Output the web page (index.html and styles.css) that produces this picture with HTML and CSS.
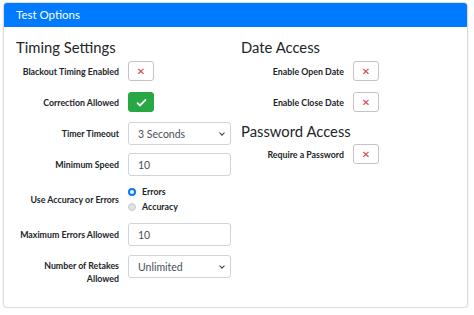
FILE: index.html
```html
<!DOCTYPE html>
<html lang="en">
<head>
  <meta charset="UTF-8" />
  <title>Test Options</title>
  <link rel="stylesheet" href="styles.css">
</head>
<body>

  <div class="card">
    <div class="card-header">Test Options</div>

    <div class="card-body">
      <!-- Timing -->
      <div class="col">
        <h3>Timing Settings</h3>

        <div class="row">
          <label>Blackout Timing Enabled</label>
          <button class="toggle off">&#x2715;</button>
        </div>

        <div class="row row-b">
          <label>Correction Allowed</label>
          <button class="toggle on">
            <svg width="11" height="9" viewBox="0 0 11 9"><path d="M1 4.6 L4 7.5 L10 1.4" fill="none" stroke="#fff" stroke-width="1.8"/></svg>
          </button>
        </div>

        <div class="row row-c">
          <label>Timer Timeout</label>
          <div class="select">3 Seconds <span class="chev"></span></div>
        </div>

        <div class="row row-d">
          <label>Minimum Speed</label>
          <div class="input">10</div>
        </div>

        <div class="row row-e">
          <label>Use Accuracy or Errors</label>
          <div class="radios">
            <div class="radio"><span class="dot checked"></span>Errors</div>
            <div class="radio"><span class="dot"></span>Accuracy</div>
          </div>
        </div>

        <div class="row row-f">
          <label>Maximum Errors Allowed</label>
          <div class="input">10</div>
        </div>

        <div class="row row-g top">
          <label>Number of Retakes Allowed</label>
          <div class="select">Unlimited <span class="chev"></span></div>
        </div>
      </div>

      <!-- Access -->
      <div class="col">
        <h3>Date Access</h3>

        <div class="row">
          <label>Enable Open Date</label>
          <button class="toggle off">&#x2715;</button>
        </div>

        <div class="row row-b">
          <label>Enable Close Date</label>
          <button class="toggle off">&#x2715;</button>
        </div>

        <h3 class="h-pass">Password Access</h3>

        <div class="row row-p">
          <label>Require a Password</label>
          <button class="toggle off">&#x2715;</button>
        </div>
      </div>
    </div>
  </div>

</body>
</html>
```

FILE: styles.css
```css
body {
  margin: 0;
  background: #fff;
  font-family: Lato, 'Open Sans', sans-serif;
  color: #212529;
}

.card {
  margin: 2px 6px 0 3px;
  height: 306px;
  box-sizing: border-box;
  border: 1px solid #dcdcdc;
  border-radius: 4px;
  box-shadow: 0 1px 2px rgba(0,0,0,0.12);
  overflow: hidden;
}

.card-header {
  background-color: #007bff;
  color: #fff;
  font-size: 11.5px;
  height: 24px;
  line-height: 24px;
  padding: 0 12px;
}

.card-body {
  display: flex;
  padding: 10px 0 0 12px;
}

.col {
  width: 225px;
}

h3 {
  margin: 0 0 3px;
  font-size: 14.8px;
  font-weight: normal;
  line-height: 21px;
}

.h-pass {
  margin-top: 9px;
  margin-bottom: 2px;
}

.row {
  display: flex;
  align-items: center;
}

.row.top {
  align-items: flex-start;
}

.row label {
  width: 103px;
  margin-right: 9px;
  text-align: right;
  font-size: 8.8px;
  font-weight: bold;
  line-height: 13px;
}

.row.top label {
  padding-top: 4px;
}

.row-b { margin-top: 11px; }
.row-c { margin-top: 10px; }
.row-d { margin-top: 8px; }
.row-e { margin-top: 9px; }
.row-f { margin-top: 10px; }
.row-g { margin-top: 9px; }

.toggle {
  width: 26px;
  height: 20px;
  padding: 0;
  border: 1px solid #c4c4c4;
  border-radius: 3px;
  background: #fff;
  color: #dc3545;
  font-size: 10px;
  font-weight: bold;
  font-family: 'DejaVu Sans', sans-serif;
  display: flex;
  align-items: center;
  justify-content: center;
}

.toggle.on {
  background: #28a745;
  border-color: #28a745;
}

.select, .input {
  width: 103px;
  height: 23px;
  box-sizing: border-box;
  border: 1px solid #ced4da;
  border-radius: 3px;
  padding: 0 9px;
  font-size: 10.5px;
  color: #495057;
  display: flex;
  align-items: center;
}

.select {
  justify-content: space-between;
}

.chev {
  width: 3px;
  height: 3px;
  border-right: 1.2px solid #343a40;
  border-bottom: 1.2px solid #343a40;
  transform: rotate(45deg);
  margin: -2px -3px 0 0;
}

.radios {
  display: flex;
  flex-direction: column;
  gap: 2px;
}

.radio {
  display: flex;
  align-items: center;
  font-size: 8.8px;
  font-weight: bold;
  line-height: 13px;
}

.dot {
  width: 8px;
  height: 8px;
  box-sizing: border-box;
  border-radius: 50%;
  background: #dee2e6;
  border: 1px solid #c8ccd0;
  margin-right: 6px;
}

.dot.checked {
  background: #fff;
  border: 2.5px solid #007bff;
}
```
